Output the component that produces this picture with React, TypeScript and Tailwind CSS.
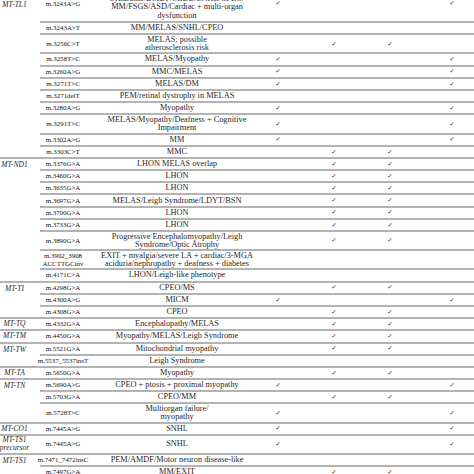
import React from 'react';

type Row = {
  gene?: string[];
  mut: string[];
  ph: string[];
  checks?: 'a' | 'b';
  tall?: boolean;
  end?: boolean;
};

const rows: Row[] = [
  { gene: ['MT-TL1'], mut: ['m.3243A>G'], ph: ['Syndrome/DMDF/MIDD/SNHL/CPEO/', 'MM/FSGS/ASD/Cardiac + multi-organ', 'dysfunction'], checks: 'a' },
  { mut: ['m.3243A>T'], ph: ['MM/MELAS/SNHL/CPEO'] },
  { mut: ['m.3256C>T'], ph: ['MELAS; possible', 'atherosclerosis risk'], checks: 'b', tall: true },
  { mut: ['m.3258T>C'], ph: ['MELAS/Myopathy'], checks: 'a' },
  { mut: ['m.3260A>G'], ph: ['MMC/MELAS'], checks: 'a' },
  { mut: ['m.3271T>C'], ph: ['MELAS/DM'], checks: 'a' },
  { mut: ['m.3271delT'], ph: ['PEM/retinal dystrophy in MELAS'] },
  { mut: ['m.3280A>G'], ph: ['Myopathy'], checks: 'a' },
  { mut: ['m.3291T>C'], ph: ['MELAS/Myopathy/Deafness + Cognitive', 'Impairment'], checks: 'a', tall: true },
  { mut: ['m.3302A>G'], ph: ['MM'], checks: 'a' },
  { mut: ['m.3303C>T'], ph: ['MMC'], checks: 'b', end: true },
  { gene: ['MT-ND1'], mut: ['m.3376G>A'], ph: ['LHON MELAS overlap'], checks: 'b' },
  { mut: ['m.3460G>A'], ph: ['LHON'], checks: 'b' },
  { mut: ['m.3635G>A'], ph: ['LHON'], checks: 'b' },
  { mut: ['m.3697G>A'], ph: ['MELAS/Leigh Syndrome/LDYT/BSN'], checks: 'b' },
  { mut: ['m.3700G>A'], ph: ['LHON'], checks: 'b' },
  { mut: ['m.3733G>A'], ph: ['LHON'], checks: 'b' },
  { mut: ['m.3890G>A'], ph: ['Progressive Encephalomyopathy/Leigh', 'Syndrome/Optic Atrophy'], checks: 'b', tall: true },
  { mut: ['m.3902_3908', 'ACCTTGCinv'], ph: ['EXIT + myalgia/severe LA + cardiac/3-MGA', 'aciduria/nephropathy + deafness + diabetes'], tall: true },
  { mut: ['m.4171C>A'], ph: ['LHON/Leigh-like phenotype'], end: true },
  { gene: ['MT-TI'], mut: ['m.4298G>A'], ph: ['CPEO/MS'], checks: 'b' },
  { mut: ['m.4300A>G'], ph: ['MICM'], checks: 'a' },
  { mut: ['m.4308G>A'], ph: ['CPEO'], checks: 'b', end: true },
  { gene: ['MT-TQ'], mut: ['m.4332G>A'], ph: ['Encephalopathy/MELAS'], checks: 'b', end: true },
  { gene: ['MT-TM'], mut: ['m.4450G>A'], ph: ['Myopathy/MELAS/Leigh Syndrome'], checks: 'b', end: true },
  { gene: ['MT-TW'], mut: ['m.5521G>A'], ph: ['Mitochondrial myopathy'], checks: 'b' },
  { mut: ['m.5537_5537insT'], ph: ['Leigh Syndrome'], end: true },
  { gene: ['MT-TA'], mut: ['m.5650G>A'], ph: ['Myopathy'], checks: 'b', end: true },
  { gene: ['MT-TN'], mut: ['m.5690A>G'], ph: ['CPEO + ptosis + proximal myopathy'], checks: 'a' },
  { mut: ['m.5703G>A'], ph: ['CPEO/MM'], checks: 'b' },
  { mut: ['m.5728T>C'], ph: ['Multiorgan failure/', 'myopathy'], checks: 'a', tall: true, end: true },
  { gene: ['MT-CO1'], mut: ['m.7445A>G'], ph: ['SNHL'], checks: 'a', end: true },
  { gene: ['MT-TS1', 'precursor'], mut: ['m.7445A>G'], ph: ['SNHL'], checks: 'a', tall: true, end: true },
  { gene: ['MT-TS1'], mut: ['m.7471_7472insC'], ph: ['PEM/AMDF/Motor neuron disease-like'] },
  { mut: ['m.7497G>A'], ph: ['MM/EXIT'], checks: 'b' },
];

function Check({ on, w }: { on: boolean; w: string }) {
  return (
    <div className={`${w} shrink-0 flex items-center justify-center`}>
      {on && <span className="font-['DejaVu_Sans'] text-[6.5px] leading-none text-[#1e1e1e]">✓</span>}
    </div>
  );
}

function TableRow({ row, first }: { row: Row; first: boolean }) {
  const height = first ? 'h-[37px] -mt-[14px]' : row.tall ? 'h-[19.2px]' : 'h-[12.2px]';
  const a = row.checks === 'a';
  const b = row.checks === 'b';

  return (
    <div className={`flex ${height}`}>
      {/* gene */}
      <div
        className={`w-[40px] shrink-0 flex flex-col items-center justify-center pr-[11px] italic text-[7.5px] leading-[8px] ${
          row.end ? 'border-b-2 border-[#b3b3b3]' : ''
        }`}
      >
        {row.gene?.map((g) => (
          <span key={g} className="whitespace-nowrap">{g}</span>
        ))}
      </div>

      <div className="flex flex-1 border-b-2 border-[#b3b3b3]">
        {/* mutation */}
        <div className="w-[46px] shrink-0 flex flex-col items-center justify-center text-[6.9px] leading-[8px] text-[#141414]">
          {row.mut.map((m) => (
            <span key={m} className="whitespace-nowrap">{m}</span>
          ))}
        </div>

        {/* phenotype */}
        <div
          className={`w-[164px] shrink-0 pl-[18px] flex flex-col items-center text-[8.3px] ${
            first ? 'justify-end pb-[1px] leading-[8.5px]' : 'justify-center leading-[8px]'
          }`}
        >
          {row.ph.map((p) => (
            <span key={p} className="whitespace-nowrap">{p}</span>
          ))}
        </div>

        <Check on={a} w="w-[56px]" />
        <Check on={b} w="w-[56px]" />
        <Check on={b} w="w-[56px]" />
        <Check on={a} w="w-[68px]" />
      </div>
    </div>
  );
}

export default function App() {
  return (
    <div className="w-[474px] h-[474px] overflow-hidden bg-white text-[#1f1f1f] font-['Liberation_Serif',serif]">
      {rows.map((row, i) => (
        <TableRow key={i} row={row} first={i === 0} />
      ))}
    </div>
  );
}
